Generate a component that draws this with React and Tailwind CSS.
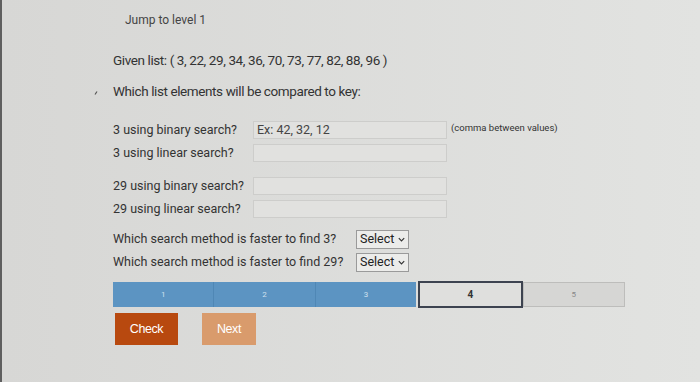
import React from "react";

const font = { fontFamily: "Roboto, 'Liberation Sans', sans-serif" };
const btnFont = { fontFamily: "'Liberation Sans', Arial, sans-serif" };

function Chevron() {
  return (
    <svg width="9" height="9" viewBox="0 0 10 10" className="ml-[3px]">
      <path d="M2 3.5 L5 6.5 L8 3.5" fill="none" stroke="#333" strokeWidth="1.3" />
    </svg>
  );
}

function Row({ label, placeholder, note, className = "" }) {
  return (
    <div className={"flex items-center h-[18px] " + className}>
      <div className="w-[140px] text-[12.5px] text-[#333]">{label}</div>
      <div className="w-[194px] h-[18px] border border-[#cdcdcb] bg-[#e1e1df] flex items-center pl-[3px] text-[12.5px] text-[#444]">
        {placeholder}
      </div>
      {note && <div className="ml-[4px] text-[9.5px] text-[#333] -mt-[4px]">{note}</div>}
    </div>
  );
}

function SelectRow({ label, className = "" }) {
  return (
    <div className={"flex items-center h-[19px] " + className}>
      <div className="w-[243px] text-[12.5px] text-[#333]">{label}</div>
      <div className="w-[53px] h-[19px] border border-[#9a9a9a] bg-[#ececea] flex items-center pl-[3px] text-[12.5px] text-[#222]">
        Select
        <Chevron />
      </div>
    </div>
  );
}

export default function App() {
  const segs = ["1", "2", "3", "4", "5"];
  return (
    <div
      className="w-[700px] h-[382px] bg-gradient-to-r from-[#d7d7d5] to-[#e2e3e1] border-l-2 border-[#5f5f5f] overflow-hidden flex flex-col pl-[111px]"
      style={font}
    >
      <div className="mt-[12px] ml-[12px] text-[12px] leading-[16px] text-[#444]">Jump to level 1</div>
      <div className="mt-[23px] text-[13.5px] tracking-[-0.4px] leading-[18px] text-[#333]">
        Given list: ( 3, 22, 29, 34, 36, 70, 73, 77, 82, 88, 96 )
      </div>
      <div className="relative mt-[13px] text-[13.5px] tracking-[-0.4px] leading-[18px] text-[#333]">
        <svg width="4" height="4" viewBox="0 0 4 4" className="absolute -left-[19px] top-[9px]">
          <path d="M3 0.5 L1 3.5" stroke="#555" strokeWidth="1.2" />
        </svg>
        Which list elements will be compared to key:
      </div>
      <Row className="mt-[21px]" label="3 using binary search?" placeholder="Ex: 42, 32, 12" note="(comma between values)" />
      <Row className="mt-[5px]" label="3 using linear search?" />
      <Row className="mt-[15px]" label="29 using binary search?" />
      <Row className="mt-[5px]" label="29 using linear search?" />
      <SelectRow className="mt-[12px]" label="Which search method is faster to find 3?" />
      <SelectRow className="mt-[4px]" label="Which search method is faster to find 29?" />
      <div className="mt-[10px] flex w-[512px] h-[25px] items-stretch">
        {segs.map((s, i) => {
          if (i < 3)
            return (
              <div
                key={s}
                className={
                  "flex-1 bg-[#5c94c2] flex items-center justify-center text-[8px] text-[#cfe0ee] " +
                  (i > 0 ? "border-l border-[#4f87b5]" : "")
                }
              >
                {s}
              </div>
            );
          if (i === 3)
            return (
              <div
                key={s}
                className="flex-1 ml-[2px] -my-[1px] border-2 border-[#3d4350] bg-[#dfdfdd] flex items-center justify-center text-[10px] font-bold text-[#333]"
              >
                {s}
              </div>
            );
          return (
            <div
              key={s}
              className="flex-1 bg-[#d6d6d4] border border-[#bdbdbb] flex items-center justify-center text-[8px] text-[#888]"
            >
              {s}
            </div>
          );
        })}
      </div>
      <div className="mt-[6px] ml-[2px] flex gap-[24px]" style={btnFont}>
        <div className="w-[63px] h-[32px] bg-[#b8490f] flex items-center justify-center text-[12.5px] text-white tracking-[-0.4px]">
          Check
        </div>
        <div className="w-[54px] h-[32px] bg-[#d99b6c] flex items-center justify-center text-[12.5px] text-white tracking-[-0.4px]">
          Next
        </div>
      </div>
    </div>
  );
}
